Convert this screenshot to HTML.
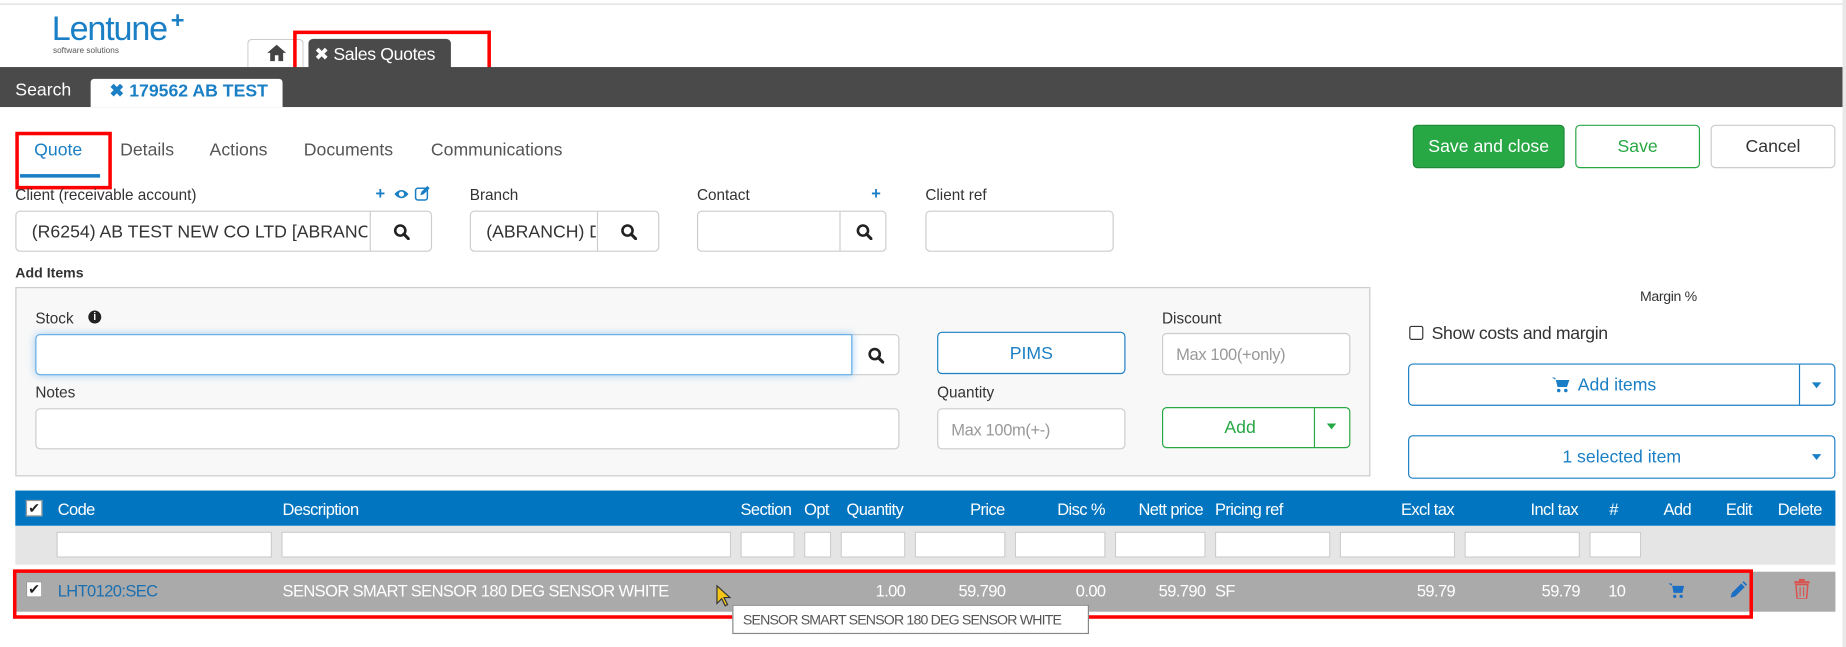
<!DOCTYPE html>
<html><head><meta charset="utf-8"><style>
*{box-sizing:border-box;margin:0;padding:0}
html,body{width:1846px;height:647px;overflow:hidden;background:#fff;font-family:"Liberation Sans",Arial,sans-serif}
#c{position:absolute;left:0;top:0;width:1568px;height:550px;transform:scale(1.17730,1.17636);transform-origin:0 0}
.a{position:absolute;white-space:nowrap}
.lbl{font-size:13px;color:#333}
.inp{position:absolute;background:#fff;border:1px solid #ccc;border-radius:4px}
.btn{position:absolute;border-radius:4px;display:flex;align-items:center;justify-content:center;font-size:15px}
.th{position:absolute;top:425px;font-size:14px;color:#fff;letter-spacing:-0.5px}
.fi{position:absolute;top:452px;height:22px;background:#fff;border:1px solid #ccc}
.td{position:absolute;top:494px;font-size:14px;color:#fff;letter-spacing:-0.5px}
.cb{position:absolute;width:14px;height:14px;background:#fff;border:1px solid #999;font-size:12px;line-height:12px;text-align:center;color:#222}
.srch{position:absolute;top:0;bottom:0;border-left:1px solid #ccc;display:flex;align-items:center;justify-content:center}
.red{position:absolute;border:3px solid #f00}
</style></head><body><div id="c">
<svg width="0" height="0" style="position:absolute"><defs><g id="mg"><circle cx="6" cy="6" r="4.3" fill="none" stroke="#222" stroke-width="2.2"/><path d="M9 9l4 4" stroke="#222" stroke-width="2.6" stroke-linecap="round"/></g></defs></svg>
<div class="a" style="left:0;top:3px;width:1568px;height:1px;background:#ddd"></div>
<div class="a" style="left:1565px;top:0;width:3px;height:550px;background:#e8e8e8"></div>
<div class="a" style="left:44px;top:9px;font-size:29px;color:#1a7fc4;letter-spacing:-1px">Lentune</div>
<div class="a" style="left:145px;top:7px;font-size:20px;font-weight:bold;color:#1a7fc4">+</div>
<div class="a" style="left:45px;top:40px;font-size:7px;color:#555">software solutions</div>
<div class="a" style="left:210px;top:33px;width:48px;height:25px;border:1px solid #ccc;border-bottom:none;border-radius:4px 4px 0 0;background:#fff"></div>
<svg class="a" style="left:226px;top:37px" width="18" height="16" viewBox="0 0 18 16"><path d="M9 1L1 8h2.5v7h4v-5h3v5h4V8H17z" fill="#444"/></svg>
<div class="a" style="left:262px;top:33px;width:121px;height:25px;background:#4a4a4a;border-radius:4px 4px 0 0;color:#fff;font-size:15px;padding:4px 0 0 5px;letter-spacing:-0.3px">✖ Sales Quotes</div>
<div class="red" style="left:249px;top:26px;width:168px;height:36px"></div>
<div class="a" style="left:0;top:57px;width:1565px;height:34px;background:#4a4a4a"></div>
<div class="a" style="left:13px;top:68px;font-size:15px;color:#fff">Search</div>
<div class="a" style="left:77px;top:67px;width:163px;height:24px;background:#fff;border-radius:3px 3px 0 0;color:#1a7fc4;font-weight:bold;font-size:15px;padding:1px 0 0 16px">✖ 179562 AB TEST</div>
<div class="a" style="left:29px;top:119px;font-size:15px;color:#1a7fc4">Quote</div>
<div class="a" style="left:102px;top:119px;font-size:15px;color:#555">Details</div>
<div class="a" style="left:178px;top:119px;font-size:15px;color:#555">Actions</div>
<div class="a" style="left:258px;top:119px;font-size:15px;color:#555">Documents</div>
<div class="a" style="left:366px;top:119px;font-size:15px;color:#555">Communications</div>
<div class="a" style="left:17px;top:148px;width:68px;height:3px;background:#1a7fc4"></div>
<div class="red" style="left:13px;top:112px;width:82px;height:49px"></div>
<div class="btn" style="left:1200px;top:106px;width:129px;height:37px;background:#28a745;color:#fff;border:1px solid #1e8a38">Save and close</div>
<div class="btn" style="left:1338px;top:106px;width:106px;height:37px;border:1px solid #28a745;color:#28a745">Save</div>
<div class="btn" style="left:1453px;top:106px;width:106px;height:37px;border:1px solid #ccc;color:#333">Cancel</div>
<div class="a lbl" style="left:13px;top:158px">Client (receivable account)</div>
<div class="a" style="left:319px;top:156px;font-size:14px;font-weight:bold;color:#1a7fc4">+</div>
<svg class="a" style="left:334px;top:160px" width="14" height="10" viewBox="0 0 14 10"><path d="M1 5Q7-2 13 5Q7 12 1 5z" fill="#1a7fc4"/><circle cx="7" cy="5" r="2.2" fill="#fff"/></svg>
<svg class="a" style="left:352px;top:158px" width="13" height="13" viewBox="0 0 13 13"><rect x="1" y="2" width="10" height="10" rx="2" fill="none" stroke="#1a7fc4" stroke-width="1.3"/><path d="M5 8l1-3 5-5 2 2-5 5z" fill="#1a7fc4"/></svg>
<div class="a lbl" style="left:399px;top:158px">Branch</div>
<div class="a lbl" style="left:592px;top:158px">Contact</div>
<div class="a" style="left:740px;top:156px;font-size:14px;font-weight:bold;color:#1a7fc4">+</div>
<div class="a lbl" style="left:786px;top:158px">Client ref</div>
<div class="inp" style="left:13px;top:179px;width:354px;height:35px"><div class="a" style="left:13px;top:9px;font-size:15px;color:#333;width:285px;overflow:hidden">(R6254) AB TEST NEW CO LTD [ABRANCH]</div><div class="srch" style="left:300px;width:53px"><svg width="14" height="14"><use href="#mg"/></svg></div></div>
<div class="inp" style="left:399px;top:179px;width:161px;height:35px"><div class="a" style="left:13px;top:9px;font-size:15px;color:#333;width:93px;overflow:hidden">(ABRANCH) DEF</div><div class="srch" style="left:107px;width:53px"><svg width="14" height="14"><use href="#mg"/></svg></div></div>
<div class="inp" style="left:592px;top:179px;width:161px;height:35px"><div class="srch" style="left:120px;width:40px"><svg width="14" height="14"><use href="#mg"/></svg></div></div>
<div class="inp" style="left:786px;top:179px;width:160px;height:35px"></div>
<div class="a" style="left:13px;top:225px;font-size:12px;font-weight:bold;color:#333">Add Items</div>
<div class="a" style="left:13px;top:244px;width:1151px;height:161px;background:#f8f8f8;border:1px solid #ccc"></div>
<div class="a lbl" style="left:30px;top:263px">Stock</div>
<div class="a" style="left:75px;top:264px;width:11px;height:11px;border-radius:50%;background:#222;color:#fff;font-size:9px;font-weight:bold;text-align:center;line-height:11px">i</div>
<div class="inp" style="left:30px;top:284px;width:734px;height:35px"><div class="srch" style="left:692px;width:40px"><svg width="14" height="14"><use href="#mg"/></svg></div></div>
<div class="a" style="left:30px;top:284px;width:694px;height:35px;border:1px solid #66afe9;border-radius:4px 0 0 4px;box-shadow:0 0 7px rgba(102,175,233,.6);background:#fff"></div>
<div class="btn" style="left:796px;top:282px;width:160px;height:36px;border:1px solid #1a7fc4;color:#1a7fc4;background:#fff">PIMS</div>
<div class="a lbl" style="left:987px;top:263px">Discount</div>
<div class="inp" style="left:987px;top:283px;width:160px;height:36px"><div class="a" style="left:11px;top:9px;font-size:14px;color:#999;letter-spacing:-0.3px">Max 100(+only)</div></div>
<div class="a lbl" style="left:30px;top:326px">Notes</div>
<div class="inp" style="left:30px;top:347px;width:734px;height:35px"></div>
<div class="a lbl" style="left:796px;top:326px">Quantity</div>
<div class="inp" style="left:796px;top:347px;width:160px;height:35px"><div class="a" style="left:11px;top:9px;font-size:14px;color:#999;letter-spacing:-0.3px">Max 100m(+-)</div></div>
<div class="btn" style="left:987px;top:346px;width:160px;height:35px;border:1px solid #28a745;color:#28a745;background:#fff;justify-content:flex-start;padding-left:52px">Add</div>
<div class="a" style="left:1116px;top:347px;width:1px;height:33px;background:#28a745"></div>
<div class="a" style="left:1127px;top:360px;border:4px solid transparent;border-top:5px solid #28a745"></div>
<div class="a" style="left:1393px;top:245px;font-size:12px;color:#333;letter-spacing:-0.3px">Margin %</div>
<div class="a" style="left:1197px;top:277px;width:12px;height:12px;border:1px solid #333;border-radius:2px;background:#fff"></div>
<div class="a" style="left:1216px;top:275px;font-size:15px;color:#333;letter-spacing:-0.3px">Show costs and margin</div>
<div class="btn" style="left:1196px;top:309px;width:363px;height:36px;border:1px solid #1a7fc4;color:#1a7fc4;background:#fff;padding-right:30px"><svg width="16" height="14" viewBox="0 0 16 14" style="margin-right:6px"><path d="M0 1h3l2 8h8l2-6H4z" fill="#1a7fc4"/><circle cx="6" cy="12" r="1.5" fill="#1a7fc4"/><circle cx="12" cy="12" r="1.5" fill="#1a7fc4"/></svg>Add items</div>
<div class="a" style="left:1528px;top:310px;width:1px;height:34px;background:#1a7fc4"></div>
<div class="a" style="left:1539px;top:325px;border:4px solid transparent;border-top:5px solid #1a7fc4"></div>
<div class="btn" style="left:1196px;top:370px;width:363px;height:37px;border:1px solid #1a7fc4;color:#1a7fc4;background:#fff">1 selected item</div>
<div class="a" style="left:1539px;top:386px;border:4px solid transparent;border-top:5px solid #1a7fc4"></div>
<div class="a" style="left:13px;top:417px;width:1546px;height:30px;background:#0275c0"></div>
<div class="cb" style="left:22px;top:425px">✔</div>
<div class="th" style="left:49px">Code</div>
<div class="th" style="left:240px">Description</div>
<div class="th" style="left:629px">Section</div>
<div class="th" style="left:683px">Opt</div>
<div class="th" style="left:719px">Quantity</div>
<div class="th" style="left:824px">Price</div>
<div class="th" style="left:898px">Disc %</div>
<div class="th" style="left:967px">Nett price</div>
<div class="th" style="left:1032px">Pricing ref</div>
<div class="th" style="left:1190px">Excl tax</div>
<div class="th" style="left:1300px">Incl tax</div>
<div class="th" style="left:1367px">#</div>
<div class="th" style="left:1413px">Add</div>
<div class="th" style="left:1466px">Edit</div>
<div class="th" style="left:1510px">Delete</div>
<div class="a" style="left:13px;top:447px;width:1546px;height:33px;background:#e5e5e5"></div>
<div class="fi" style="left:48px;width:183px"></div>
<div class="fi" style="left:239px;width:382px"></div>
<div class="fi" style="left:629px;width:46px"></div>
<div class="fi" style="left:683px;width:23px"></div>
<div class="fi" style="left:714px;width:55px"></div>
<div class="fi" style="left:777px;width:77px"></div>
<div class="fi" style="left:862px;width:77px"></div>
<div class="fi" style="left:947px;width:77px"></div>
<div class="fi" style="left:1032px;width:98px"></div>
<div class="fi" style="left:1138px;width:98px"></div>
<div class="fi" style="left:1244px;width:98px"></div>
<div class="fi" style="left:1350px;width:44px"></div>
<div class="a" style="left:13px;top:486px;width:1546px;height:34px;background:#aaa"></div>
<div class="cb" style="left:22px;top:494px">✔</div>
<div class="td" style="left:49px;color:#1a6fb0">LHT0120:SEC</div>
<div class="td" style="left:240px">SENSOR SMART SENSOR 180 DEG SENSOR WHITE</div>
<div class="td" style="left:700px;width:69px;text-align:right">1.00</div>
<div class="td" style="left:780px;width:74px;text-align:right">59.790</div>
<div class="td" style="left:870px;width:69px;text-align:right">0.00</div>
<div class="td" style="left:950px;width:74px;text-align:right">59.790</div>
<div class="td" style="left:1032px">SF</div>
<div class="td" style="left:1150px;width:86px;text-align:right">59.79</div>
<div class="td" style="left:1256px;width:86px;text-align:right">59.79</div>
<div class="td" style="left:1366px">10</div>
<svg class="a" style="left:1417px;top:495px" width="14" height="14" viewBox="0 0 14 14"><path d="M0 1h3l1.5 8h7.5l1.5-6H3.5z" fill="#1a6fc4"/><circle cx="5.5" cy="12" r="1.4" fill="#1a6fc4"/><circle cx="11" cy="12" r="1.4" fill="#1a6fc4"/></svg>
<svg class="a" style="left:1469px;top:494px" width="15" height="15" viewBox="0 0 15 15"><path d="M1 14l1-4 8-8 3 3-8 8z M11 1l1-1 3 3-1 1z" fill="#1a6fc4"/></svg>
<svg class="a" style="left:1524px;top:492px" width="13" height="17" viewBox="0 0 13 17"><rect x="0" y="2" width="13" height="2" fill="#d9534f"/><rect x="4" y="0" width="5" height="2" fill="#d9534f"/><path d="M1.5 5h10l-1 12h-8z" fill="none" stroke="#d9534f" stroke-width="1.3"/><path d="M5 7v8M8 7v8" stroke="#d9534f"/></svg>
<div class="red" style="left:11px;top:484px;width:1478px;height:42px"></div>
<div class="a" style="left:622px;top:514px;width:303px;height:25px;background:#fff;border:1px solid #888;font-size:12px;color:#555;padding:5px 0 0 8px;letter-spacing:-0.7px;overflow:hidden">SENSOR SMART SENSOR 180 DEG SENSOR WHITE</div>
<svg class="a" style="left:608px;top:497px" width="14" height="20" viewBox="0 0 14 20"><path d="M1 1v15l4-4 3 6 2-1-3-6h5z" fill="#f5c518" stroke="#333" stroke-width="1"/></svg>
</div></body></html>
